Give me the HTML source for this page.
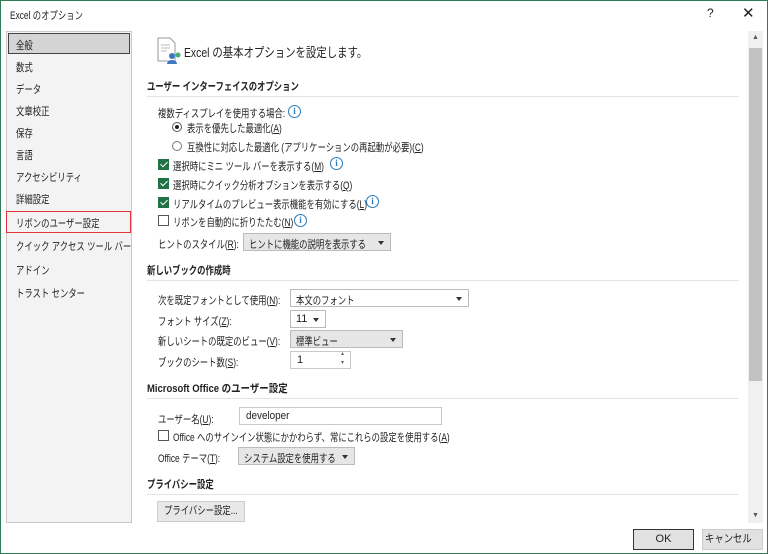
<!DOCTYPE html>
<html><head><meta charset="utf-8"><style>
*{margin:0;padding:0;box-sizing:border-box}
body{width:768px;height:554px;background:#fff;font-family:"Liberation Sans","Noto Sans CJK JP",sans-serif;font-size:11px;color:#222;position:relative;overflow:hidden}
.win{position:absolute;left:0;top:0;width:768px;height:554px;border:1px solid #2e7d57;background:#fff}
.a{position:absolute;white-space:nowrap}
.t{position:absolute;white-space:nowrap;transform:scaleX(.76);transform-origin:0 0}
.s{display:inline-block;transform:scaleX(.76);transform-origin:0 0;white-space:nowrap}
.side{position:absolute;left:5px;top:30px;width:126px;height:492px;background:#f3f3f3;border:1px solid #c8c8c8}
.h{font-weight:bold;font-size:11px}
.line{position:absolute;height:1px;background:#e4e4e4}
.cb{position:absolute;width:11px;height:11px;border:1px solid #555;background:#fff}
.cb.on{background:#217346;border-color:#217346}
.cb.on::after{content:"";position:absolute;left:3px;top:0px;width:3px;height:6px;border:solid #fff;border-width:0 1.5px 1.5px 0;transform:rotate(45deg)}
.i{position:absolute;width:13px;height:13px;border:1.3px solid #2a7ab8;border-radius:50%;color:#2a7ab8;font-size:9px;font-weight:bold;text-align:center;line-height:10px;font-family:"Liberation Serif",serif}
.dd{position:absolute;border:1px solid #bbb;background:#fff;height:18px;padding:2px 5px;font-size:11px;white-space:nowrap;overflow:hidden}
.dd.g{background:#e6e6e6}
.dd::after{content:"";position:absolute;right:6px;top:7px;border:3px solid transparent;border-top:4px solid #333}
.tb{position:absolute;border:1px solid #c8c8c8;background:#fff;height:18px;padding:2px 6px;font-size:11px;white-space:nowrap}
.btn{position:absolute;height:21px;text-align:center;line-height:19px;background:#e1e1e1;border:1px solid #ccc;white-space:nowrap;overflow:hidden}
</style></head><body><div class="win">
<div class="t" style="left:9px;top:6px">Excel のオプション</div>
<div class="a" style="left:706px;top:5px;font-size:12px">?</div>
<div class="a" style="left:741px;top:3px;font-size:15px">✕</div>
<div class="side"></div>
<div class="a" style="left:7px;top:32px;width:122px;height:21px;background:#d4d4d4;border:1px solid #444"></div>
<div class="t" style="left:15px;top:36px">全般</div>
<div class="t" style="left:15px;top:58px">数式</div>
<div class="t" style="left:15px;top:80px">データ</div>
<div class="t" style="left:15px;top:102px">文章校正</div>
<div class="t" style="left:15px;top:124px">保存</div>
<div class="t" style="left:15px;top:146px">言語</div>
<div class="t" style="left:15px;top:168px">アクセシビリティ</div>
<div class="t" style="left:15px;top:190px">詳細設定</div>
<div class="a" style="left:5px;top:210px;width:125px;height:22px;border:1.5px solid #e0343c"></div>
<div class="t" style="left:15px;top:214px">リボンのユーザー設定</div>
<div class="t" style="left:15px;top:237px">クイック アクセス ツール バー</div>
<div class="t" style="left:15px;top:261px">アドイン</div>
<div class="t" style="left:15px;top:284px">トラスト センター</div>

<svg class="a" style="left:155px;top:36px" width="26" height="28"><path d="M2 1h12l5 5v18H2z" fill="#fff" stroke="#999"/><path d="M5 8h9M5 11h9M5 14h6" stroke="#bbb"/><circle cx="16" cy="19" r="3" fill="#3b78c2"/><circle cx="22" cy="18" r="2.5" fill="#4caa6e"/><path d="M11 27a5 4 0 0 1 10 0z" fill="#3b78c2"/></svg>
<div class="t" style="left:183px;top:41px;font-size:13px;transform:scaleX(.8)">Excel の基本オプションを設定します。</div>
<div class="t h" style="left:146px;top:77px">ユーザー インターフェイスのオプション</div>
<div class="line" style="left:146px;top:95px;width:592px"></div>
<div class="t" style="left:157px;top:104px">複数ディスプレイを使用する場合:</div><div class="i" style="left:287px;top:104px">i</div>
<div class="a" style="left:171px;top:121px;width:10px;height:10px;border:1px solid #555;border-radius:50%"><div style="margin:2px;width:4px;height:4px;border-radius:50%;background:#222"></div></div>
<div class="t" style="left:186px;top:119px">表示を優先した最適化(<u>A</u>)</div>
<div class="a" style="left:171px;top:140px;width:10px;height:10px;border:1px solid #777;border-radius:50%"></div>
<div class="t" style="left:186px;top:138px">互換性に対応した最適化 (アプリケーションの再起動が必要)(<u>C</u>)</div>
<div class="cb on" style="left:157px;top:158px"></div><div class="t" style="left:172px;top:157px">選択時にミニ ツール バーを表示する(<u>M</u>)</div><div class="i" style="left:329px;top:156px">i</div>
<div class="cb on" style="left:157px;top:177px"></div><div class="t" style="left:172px;top:176px">選択時にクイック分析オプションを表示する(<u>Q</u>)</div>
<div class="cb on" style="left:157px;top:196px"></div><div class="t" style="left:172px;top:195px">リアルタイムのプレビュー表示機能を有効にする(<u>L</u>)</div><div class="i" style="left:365px;top:194px">i</div>
<div class="cb" style="left:157px;top:214px"></div><div class="t" style="left:172px;top:213px">リボンを自動的に折りたたむ(<u>N</u>)</div><div class="i" style="left:293px;top:213px">i</div>
<div class="t" style="left:157px;top:235px">ヒントのスタイル(<u>R</u>):</div>
<div class="dd g" style="left:242px;top:232px;width:148px"><span class="s">ヒントに機能の説明を表示する</span></div>
<div class="t h" style="left:146px;top:261px">新しいブックの作成時</div>
<div class="line" style="left:146px;top:279px;width:592px"></div>
<div class="t" style="left:157px;top:291px">次を既定フォントとして使用(<u>N</u>):</div>
<div class="dd" style="left:289px;top:288px;width:179px"><span class="s">本文のフォント</span></div>
<div class="t" style="left:157px;top:312px">フォント サイズ(<u>Z</u>):</div>
<div class="dd" style="left:289px;top:309px;width:36px"><span class="s" style="transform:none">11</span></div>
<div class="t" style="left:157px;top:332px">新しいシートの既定のビュー(<u>V</u>):</div>
<div class="dd g" style="left:289px;top:329px;width:113px"><span class="s">標準ビュー</span></div>
<div class="t" style="left:157px;top:353px">ブックのシート数(<u>S</u>):</div>
<div class="tb" style="left:289px;top:350px;width:61px">1</div>
<div class="a" style="left:340px;top:349px;font-size:6px;line-height:9px;color:#666">▴<br>▾</div>
<div class="t h" style="left:146px;top:379px;transform:scaleX(.86)">Microsoft Office のユーザー設定</div>
<div class="line" style="left:146px;top:397px;width:592px"></div>
<div class="t" style="left:157px;top:410px">ユーザー名(<u>U</u>):</div>
<div class="tb" style="left:238px;top:406px;width:203px"><span class="s" style="transform:scaleX(.9)">developer</span></div>
<div class="cb" style="left:157px;top:429px"></div><div class="t" style="left:172px;top:428px">Office へのサインイン状態にかかわらず、常にこれらの設定を使用する(<u>A</u>)</div>
<div class="t" style="left:157px;top:449px">Office テーマ(<u>T</u>):</div>
<div class="dd g" style="left:237px;top:446px;width:117px"><span class="s">システム設定を使用する</span></div>
<div class="t h" style="left:146px;top:475px">プライバシー設定</div>
<div class="line" style="left:146px;top:493px;width:592px"></div>
<div class="btn" style="left:156px;top:500px;width:88px;background:#e8e8e8;text-align:left;padding-left:6px"><span class="s">プライバシー設定...</span></div>
<div class="a" style="left:747px;top:30px;width:15px;height:492px;background:#f0f0f0"></div>
<div class="a" style="left:748px;top:47px;width:13px;height:333px;background:#c2c2c2"></div>
<div class="a" style="left:751px;top:33px;font-size:7px;color:#555">▲</div>
<div class="a" style="left:751px;top:511px;font-size:7px;color:#555">▼</div>
<div class="btn" style="left:632px;top:528px;width:61px;border:1.5px solid #333">OK</div>
<div class="btn" style="left:701px;top:528px;width:61px"><span class="s" style="transform:scaleX(.85)">キャンセル</span></div>
</div></body></html>
